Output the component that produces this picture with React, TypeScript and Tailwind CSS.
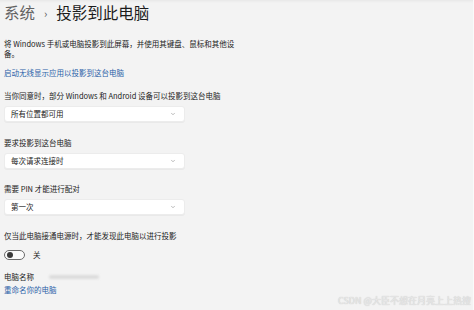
import { ChevronDown } from 'lucide-react';

const font = { fontFamily: '"Noto Sans CJK SC", "Noto Sans", sans-serif' };

const Select = ({ value }: { value: string }) => (
  <div className="flex items-center justify-between w-[181px] h-[16px] mt-[5px] pl-[6px] pr-[8px] bg-white rounded-[3px] border border-[#ececec] shadow-[0_1px_0_rgba(0,0,0,0.04)]">
    <span className="text-[7.5px] leading-none text-[#1b1b1b]">{value}</span>
    <ChevronDown className="w-[6px] h-[6px] text-[#777]" strokeWidth={2} />
  </div>
);

const Label = ({ children, className = '' }: { children: React.ReactNode; className?: string }) => (
  <div className={`text-[7.5px] leading-[10px] text-[#1b1b1b] ${className}`}>{children}</div>
);

export default function App() {
  return (
    <div
      className="relative w-[474px] h-[310px] overflow-hidden bg-[#f3f3f3] border-r border-[#fafafa] shadow-[inset_0_3px_3px_-2px_rgba(0,0,0,0.06)]"
      style={font}
    >
      <div className="flex flex-col px-[4px] pt-[3px]">
        <div className="flex items-center h-[20px] text-[15.5px] leading-none">
          <span className="text-[#626262]">系统</span>
          <span className="mx-[9px] text-[11px] text-[#555]">›</span>
          <span className="text-[#1b1b1b]">投影到此电脑</span>
        </div>

        <Label className="mt-[16px] w-[236px]">
          将 Windows 手机或电脑投影到此屏幕，并使用其键盘、鼠标和其他设备。
        </Label>

        <div className="mt-[9px] text-[7.5px] leading-[10px] text-[#2b5fa8]">
          启动无线显示应用以投影到这台电脑
        </div>

        <Label className="mt-[13px]">当你同意时，部分 Windows 和 Android 设备可以投影到这台电脑</Label>
        <Select value="所有位置都可用" />

        <Label className="mt-[16px]">要求投影到这台电脑</Label>
        <Select value="每次请求连接时" />

        <Label className="mt-[15px]">需要 PIN 才能进行配对</Label>
        <Select value="第一次" />

        <Label className="mt-[16px]">仅当此电脑接通电源时，才能发现此电脑以进行投影</Label>

        <div className="flex items-center mt-[9px] gap-[8px]">
          <div className="flex items-center w-[21px] h-[10px] px-[2px] rounded-full border border-[#6b6b6b] bg-[#fbfbfb]">
            <div className="w-[6px] h-[6px] rounded-full bg-[#3a3a3a]" />
          </div>
          <span className="text-[7.5px] leading-none text-[#1b1b1b]">关</span>
        </div>

        <div className="flex items-center mt-[12px] gap-[15px]">
          <span className="text-[7.5px] leading-[10px] text-[#1b1b1b]">电脑名称</span>
          <div className="w-[50px] h-[4px] rounded-full bg-[#dcdcdc] blur-[1px]" />
        </div>

        <div className="mt-[3px] text-[7.5px] leading-[10px] text-[#2b5fa8]">重命名你的电脑</div>
      </div>

      <div className="absolute right-[2px] bottom-[5px] text-[9px] leading-none text-[#e8e8e8] [text-shadow:0_0_1px_rgba(0,0,0,0.25)]">
        CSDN @大臣不想在月亮上上热搜
      </div>
    </div>
  );
}
